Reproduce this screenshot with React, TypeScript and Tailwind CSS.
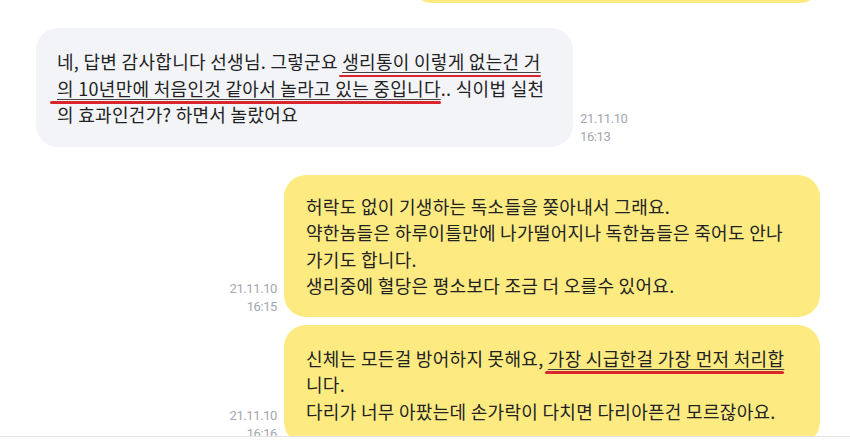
const KR = "font-['Noto_Sans_CJK_KR','Noto_Sans',sans-serif]";

function Mark({ children, lead = 3 }: { children: React.ReactNode; lead?: number }) {
  return (
    <span className="relative underline decoration-[#444] decoration-1 underline-offset-[3px]">
      {children}
      <span
        className="absolute right-0 bottom-[-3px] h-[2.5px] rounded-full bg-[#d9262c]"
        style={{ left: -lead }}
      />
    </span>
  );
}

function Stamp({ date, time, align }: { date: string; time: string; align: "left" | "right" }) {
  return (
    <div
      className={`shrink-0 pb-[1px] text-[13px] leading-[18px] tracking-[-0.4px] text-[#a3a7b0] font-['Roboto',sans-serif] ${
        align === "right" ? "text-right" : "text-left"
      }`}
    >
      <div>{date}</div>
      <div>{time}</div>
    </div>
  );
}

const bubbleText = "text-[18px] leading-[26.5px] tracking-[0.3px] text-[#222] whitespace-nowrap";

export default function App() {
  return (
    <div className={`w-[850px] h-[443px] bg-white flex flex-col overflow-hidden ${KR}`}>
      <div className="flex-1 min-h-0 overflow-hidden">
        <div className="-mt-[57px] flex flex-col">
          {/* previous message, scrolled off */}
          <div className="flex justify-end pr-[30px]">
            <div className="w-[408px] h-[60px] rounded-[20px] bg-[#fdeb82]" />
          </div>

          {/* received */}
          <div className="mt-[25px] flex items-end gap-[7px] pl-[36px]">
            <div className={`w-[537px] rounded-[22px] bg-[#f3f4f8] px-[21px] pt-[20px] pb-[19px] ${bubbleText}`}>
              네, 답변 감사합니다 선생님. 그렇군요 <Mark>생리통이 이렇게 없는건 거</Mark>
              <br />
              <Mark lead={7}>의 10년만에 처음인것 같아서 놀라고 있는 중입니다</Mark>.. 식이법 실천
              <br />
              의 효과인건가? 하면서 놀랐어요
            </div>
            <Stamp date="21.11.10" time="16:13" align="left" />
          </div>

          {/* sent */}
          <div className="mt-[28px] flex items-end justify-end gap-[7px] pr-[30px]">
            <Stamp date="21.11.10" time="16:15" align="right" />
            <div className={`w-[536px] rounded-[22px] bg-[#fdeb82] px-[22px] py-[18px] ${bubbleText}`}>
              허락도 없이 기생하는 독소들을 쫒아내서 그래요.
              <br />
              약한놈들은 하루이틀만에 나가떨어지나 독한놈들은 죽어도 안나
              <br />
              가기도 합니다.
              <br />
              생리중에 혈당은 평소보다 조금 더 오를수 있어요.
            </div>
          </div>

          <div className="mt-[8px] flex items-end justify-end gap-[7px] pr-[30px]">
            <Stamp date="21.11.10" time="16:16" align="right" />
            <div className={`w-[536px] rounded-[22px] bg-[#fdeb82] px-[22px] py-[20px] ${bubbleText}`}>
              신체는 모든걸 방어하지 못해요, <Mark>가장 시급한걸 가장 먼저 처리합</Mark>
              <br />
              니다.
              <br />
              다리가 너무 아팠는데 손가락이 다치면 다리아픈건 모르잖아요.
            </div>
          </div>
        </div>
      </div>
      <div className="h-[7px] shrink-0 border-t border-[#e4e4e6] bg-white" />
    </div>
  );
}
